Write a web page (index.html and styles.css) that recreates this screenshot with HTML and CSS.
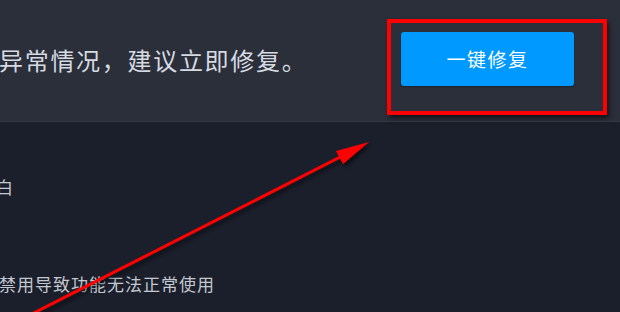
FILE: index.html
```html
<html>
    <head>
        <title>修复</title>
        <link rel="stylesheet" href="styles.css">
    </head>
    <body>

        <div class="alert">
            <div class="alert-text">异常情况，建议立即修复。</div>
            <button class="fix-btn">一键修复</button>
        </div>

        <ul class="issues">
            <li class="issue issue-cut">白</li>
            <li class="issue">禁用导致功能无法正常使用</li>
        </ul>

        <div class="mark-box"></div>

        <svg class="mark-arrow" width="620" height="312" viewBox="0 0 620 312">
            <defs>
                <filter id="shade" x="-10%" y="-10%" width="130%" height="130%">
                    <feDropShadow dx="2" dy="3" stdDeviation="2" flood-color="#000" flood-opacity="0.6"/>
                </filter>
            </defs>
            <g filter="url(#shade)">
                <line x1="20" y1="320" x2="350" y2="152" stroke="#ff0000" stroke-width="3"/>
                <polygon points="369,142 336,151 343,164" fill="#ff0000"/>
            </g>
        </svg>

    </body>
</html>
```

FILE: styles.css
```css
body {
    font-family: "Noto Sans CJK SC", "Noto Sans", sans-serif;
    background-color: #1b1f2b;
    color: #d6dae2;
    margin: 0;
    width: 620px;
    height: 312px;
    overflow: hidden;
    position: relative;
}

.alert {
    height: 121px;
    background-color: #2b2f3a;
    border-bottom: 1px solid #343844;
    display: flex;
    justify-content: space-between;
    align-items: center;
    padding-right: 46px;
}

.alert-text {
    font-size: 24px;
    letter-spacing: 1.7px;
    margin-left: -1px;
    margin-top: -2px;
}

.fix-btn {
    background-color: #0099ff;
    border: none;
    color: white;
    font-family: "Noto Sans CJK SC", sans-serif;
    font-size: 19px;
    letter-spacing: 1.5px;
    width: 173px;
    height: 54px;
    border-radius: 3px;
    margin-top: -4px;
    box-shadow: 0 1px 2px rgba(0, 0, 0, 0.3);
}

.issues {
    list-style-type: none;
    padding: 0;
    margin: 0;
}

.issue {
    font-size: 17px;
    line-height: 24px;
    color: #c4c8d0;
    letter-spacing: 1px;
}

.issue-cut {
    margin-top: 53px;
    margin-left: -4px;
}

.issue + .issue {
    margin-top: 73px;
    margin-left: -1px;
}

.mark-box {
    position: absolute;
    left: 387px;
    top: 19px;
    width: 212px;
    height: 88px;
    border: 4px solid #ff0000;
    box-shadow: 2px 3px 5px rgba(0, 0, 0, 0.6);
}

.mark-arrow {
    position: absolute;
    left: 0;
    top: 0;
}
```
